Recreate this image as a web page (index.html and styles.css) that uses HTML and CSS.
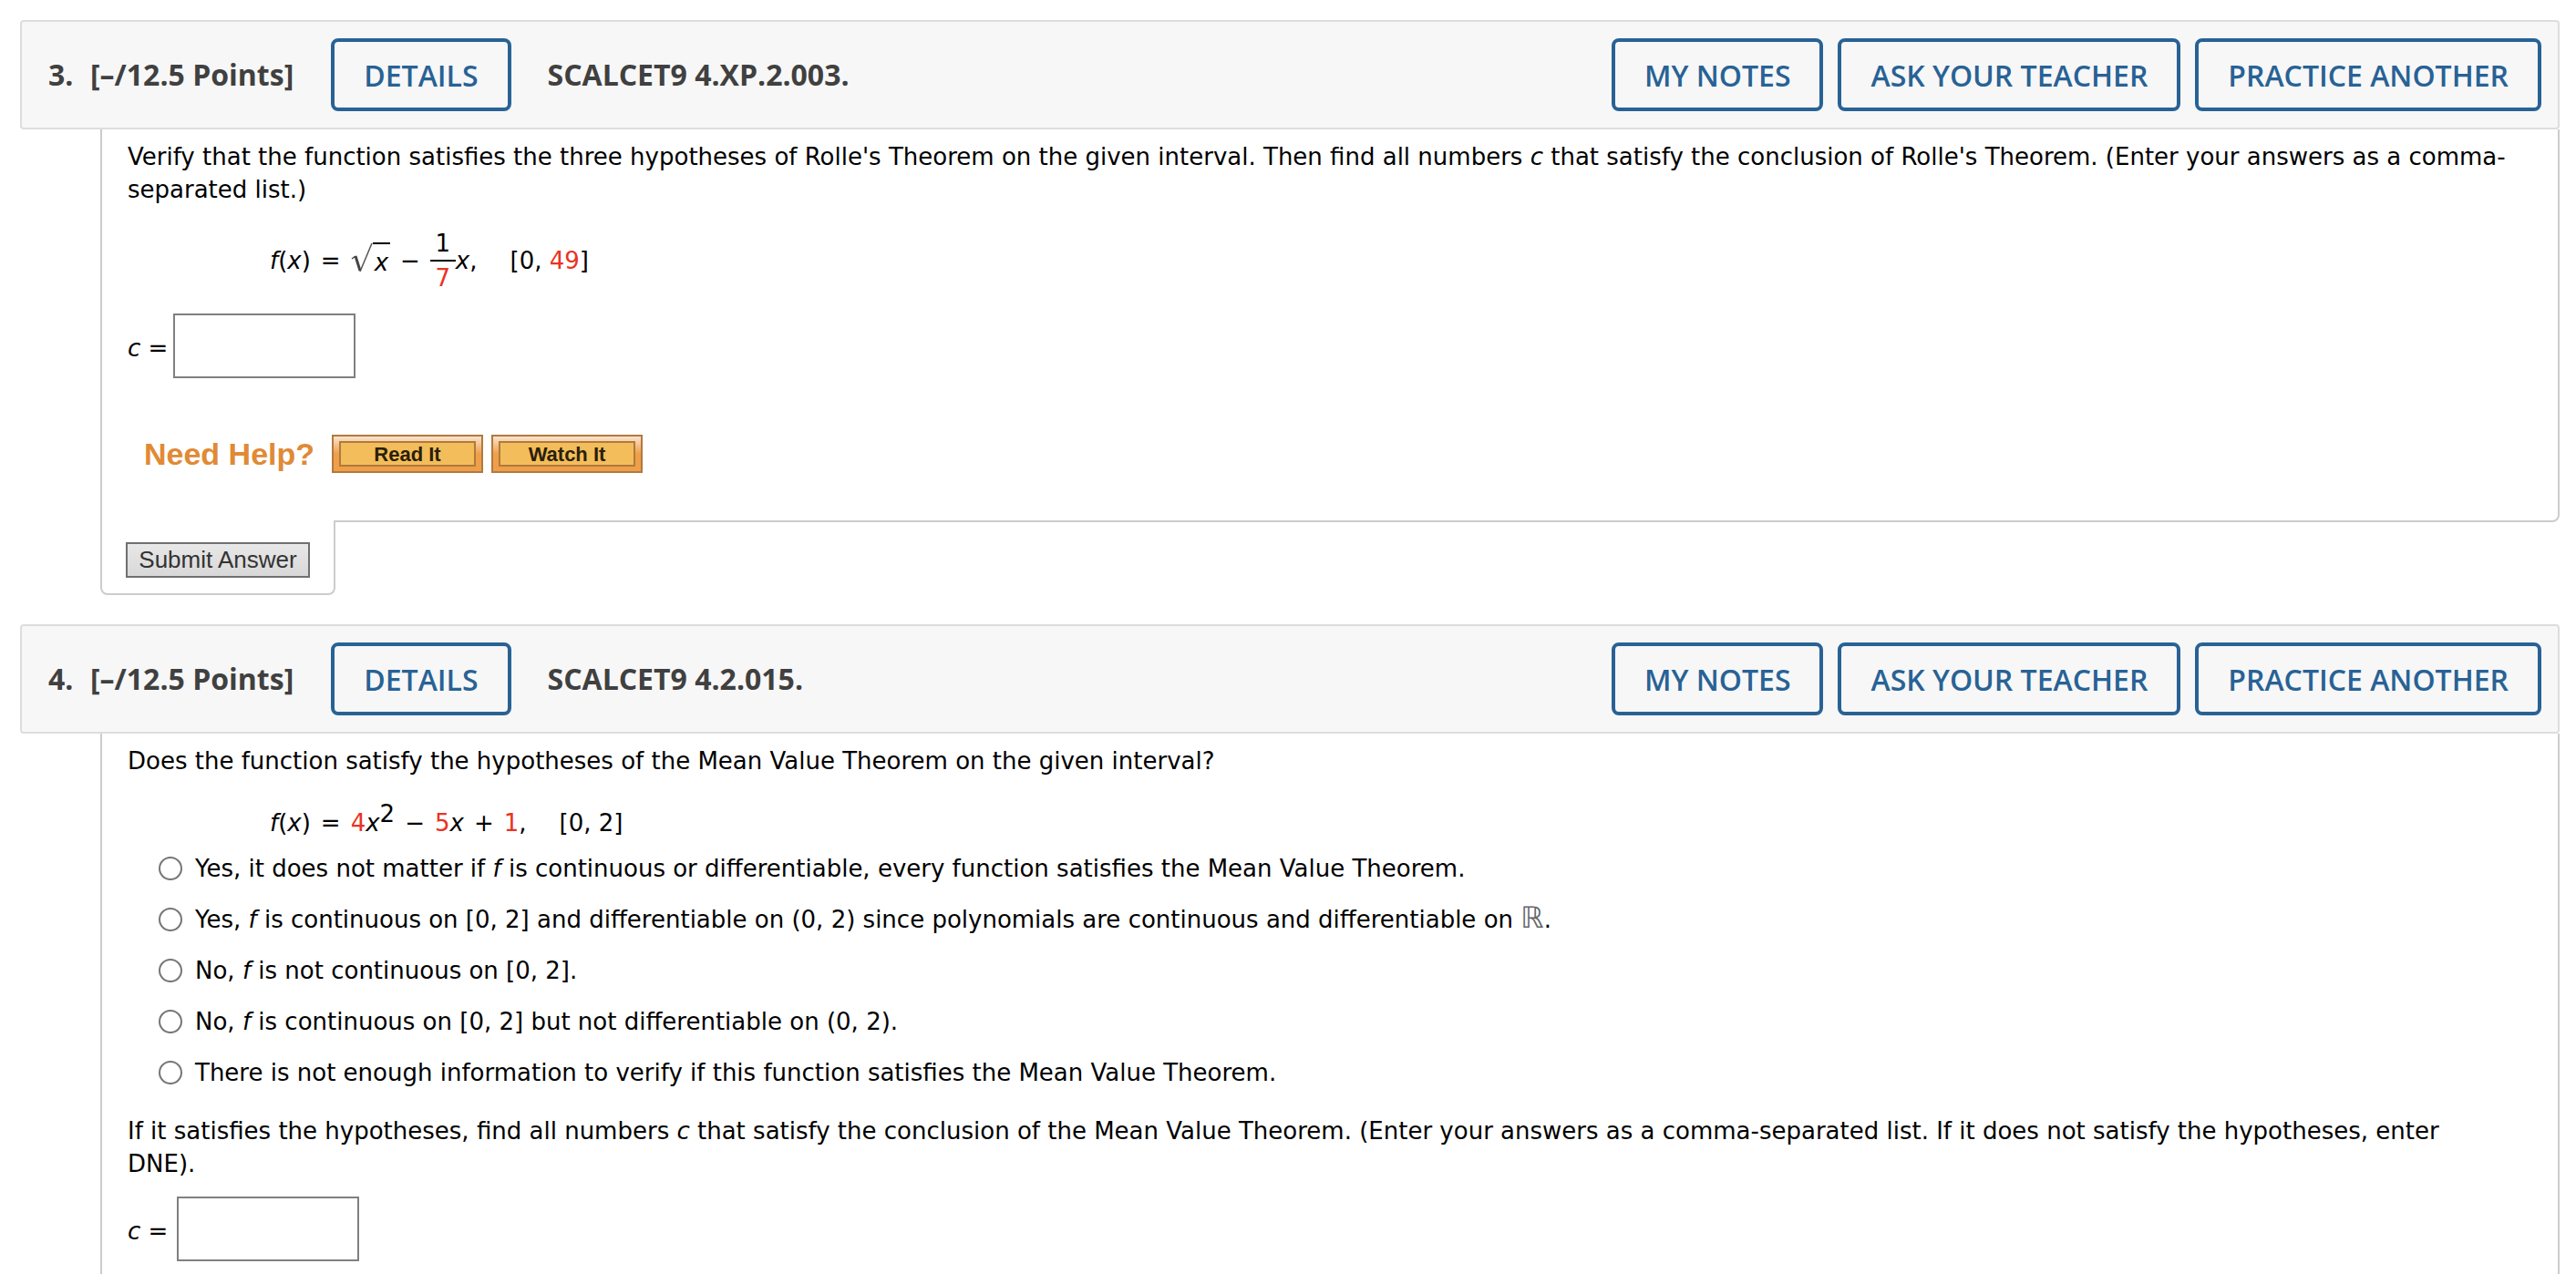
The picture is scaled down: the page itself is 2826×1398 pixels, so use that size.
FILE: index.html
```html
<!DOCTYPE html>
<html lang="en">
<head>
    <meta charset="UTF-8">
    <meta name="viewport" content="width=device-width, initial-scale=1.0">
    <title>Assignment Questions</title>
    <link rel="stylesheet" href="styles.css">
</head>
<body>

<!-- Question 3 -->
<section class="question">
    <header class="question-header">
        <span class="number">3.</span>
        <span class="points">[–/12.5 Points]</span>
        <button type="button" class="btn">DETAILS</button>
        <span class="source">SCALCET9 4.XP.2.003.</span>
        <div class="actions">
            <button type="button" class="btn">MY NOTES</button>
            <button type="button" class="btn">ASK YOUR TEACHER</button>
            <button type="button" class="btn">PRACTICE ANOTHER</button>
        </div>
    </header>
    <div class="panel">
        <p>Verify that the function satisfies the three hypotheses of Rolle's Theorem on the given interval. Then find all numbers <i>c</i> that satisfy the conclusion of Rolle's Theorem. (Enter your answers as a comma-separated list.)</p>

        <div class="formula formula-tall">
            <span><i>f</i>(<i>x</i>)</span>
            <span class="op">=</span>
            <span class="sqrt">
                <svg class="radical" viewBox="0 0 24 34" aria-hidden="true">
                    <path d="M1 18 L5 15" fill="none" stroke="#444" stroke-width="1.5"/>
                    <path d="M5 15 L10 31" fill="none" stroke="#444" stroke-width="3"/>
                    <path d="M10 32 L23 1" fill="none" stroke="#555" stroke-width="1.5"/>
                </svg>
                <i class="radicand">x</i>
            </span>
            <span class="op">−</span>
            <span class="fraction">
                <span class="top">1</span>
                <span class="red">7</span>
            </span>
            <span><i>x</i>,</span>
            <span class="interval">[0, <span class="red">49</span>]</span>
        </div>

        <div class="answer">
            <label for="c3"><i>c</i> =</label>
            <input type="text" id="c3">
        </div>

        <div class="help">
            <span class="help-title">Need Help?</span>
            <button type="button" class="help-btn"><span>Read It</span></button>
            <button type="button" class="help-btn"><span>Watch It</span></button>
        </div>
    </div>
    <div class="submit-tab">
        <button type="submit" class="submit">Submit Answer</button>
    </div>
</section>

<!-- Question 4 -->
<section class="question question-last">
    <header class="question-header">
        <span class="number">4.</span>
        <span class="points">[–/12.5 Points]</span>
        <button type="button" class="btn">DETAILS</button>
        <span class="source">SCALCET9 4.2.015.</span>
        <div class="actions">
            <button type="button" class="btn">MY NOTES</button>
            <button type="button" class="btn">ASK YOUR TEACHER</button>
            <button type="button" class="btn">PRACTICE ANOTHER</button>
        </div>
    </header>
    <div class="panel panel-open">
        <p>Does the function satisfy the hypotheses of the Mean Value Theorem on the given interval?</p>

        <div class="formula">
            <span><i>f</i>(<i>x</i>)</span>
            <span class="op">=</span>
            <span><span class="red">4</span><i>x</i><sup>2</sup></span>
            <span class="op">−</span>
            <span><span class="red">5</span><i>x</i></span>
            <span class="op">+</span>
            <span><span class="red">1</span>,</span>
            <span class="interval">[0, 2]</span>
        </div>

        <div class="choices">
            <label><input type="radio" name="q4"><span>Yes, it does not matter if <i>f</i> is continuous or differentiable, every function satisfies the Mean Value Theorem.</span></label>
            <label><input type="radio" name="q4"><span>Yes, <i>f</i> is continuous on [0, 2] and differentiable on (0, 2) since polynomials are continuous and differentiable on <span class="reals">ℝ</span>.</span></label>
            <label><input type="radio" name="q4"><span>No, <i>f</i> is not continuous on [0, 2].</span></label>
            <label><input type="radio" name="q4"><span>No, <i>f</i> is continuous on [0, 2] but not differentiable on (0, 2).</span></label>
            <label><input type="radio" name="q4"><span>There is not enough information to verify if this function satisfies the Mean Value Theorem.</span></label>
        </div>

        <p>If it satisfies the hypotheses, find all numbers <i>c</i> that satisfy the conclusion of the Mean Value Theorem. (Enter your answers as a comma-separated list. If it does not satisfy the hypotheses, enter DNE).</p>

        <div class="answer answer-wide">
            <label for="c4"><i>c</i> =</label>
            <input type="text" id="c4">
        </div>
    </div>
</section>

</body>
</html>
```
FILE: styles.css
```css
* {
    margin: 0;
    padding: 0;
    box-sizing: border-box;
}
body {
    min-height: 100vh;
    padding: 22px 18px 0 22px;
    display: flex;
    flex-direction: column;
    gap: 32px;
    background: #fff;
    color: #000;
    font-family: Verdana, "DejaVu Sans", sans-serif;
    font-size: 26px;
    line-height: 36px;
}
.question-last {
    flex: 1;
    display: flex;
    flex-direction: column;
}

/* Header bar */
.question-header {
    display: flex;
    align-items: center;
    padding: 18px 18px 18px 29px;
    background: #f7f7f7;
    border: 2px solid #ddd;
    border-radius: 4px;
    color: #404040;
    font-family: "Open Sans", sans-serif;
    font-size: 32px;
    font-weight: 700;
}
.number {
    width: 46px;
}
.points {
    margin-right: 41px;
}
.source {
    margin-left: 40px;
}
.actions {
    display: flex;
    gap: 16px;
    margin-left: auto;
}
.btn {
    height: 80px;
    padding: 0 32px;
    background: none;
    border: 4px solid #286295;
    border-radius: 8px;
    color: #286295;
    font-family: "Open Sans", sans-serif;
    font-size: 32px;
    font-weight: 600;
    cursor: pointer;
}

/* Question body */
.panel {
    margin-left: 88px;
    padding: 12px 54px 52px 28px;
    border: 2px solid #ccc;
    border-top: none;
    border-radius: 0 0 8px 0;
}
.panel-open {
    flex: 1;
    padding-bottom: 12px;
    border-bottom: none;
    border-radius: 0;
}
.red {
    color: #ea3323;
}

/* Formulas */
.formula {
    display: flex;
    align-items: baseline;
    padding-left: 156px;
    margin: 32px 0 14px;
}
.formula-tall {
    align-items: center;
    margin: 23px 0 21px;
}
.formula .op {
    margin: 0 11px;
}
.formula sup {
    font-size: 26px;
    line-height: 0;
}
.interval {
    margin-left: 36px;
}
.sqrt {
    display: flex;
    align-items: flex-start;
}
.radical {
    width: 24px;
    height: 34px;
}
.radicand {
    border-top: 2px solid #000;
    padding: 2px 2px 0;
}
.fraction {
    display: flex;
    flex-direction: column;
    align-items: center;
    width: 28px;
}
.fraction .top {
    width: 28px;
    border-bottom: 2px solid #000;
    text-align: center;
}

/* Answer box */
.answer {
    display: flex;
    align-items: center;
    gap: 6px;
}
.answer label {
    padding-top: 4px;
}
.answer-wide {
    gap: 10px;
    margin-top: 18px;
}
.answer input {
    width: 200px;
    height: 71px;
    border: 2px solid #808080;
    background: #fff;
    font: inherit;
}

/* Need help */
.help {
    display: flex;
    align-items: center;
    margin-top: 62px;
    padding-left: 18px;
    font-family: Arial, "Liberation Sans", sans-serif;
}
.help-title {
    width: 206px;
    color: #e08a35;
    font-size: 34px;
    font-weight: 700;
}
.help-btn {
    width: 166px;
    height: 42px;
    margin-right: 9px;
    padding: 5px 6px;
    background: linear-gradient(#fbe3cd, #ef9f49 50%);
    border: 2px solid #b07a3e;
    cursor: pointer;
}
.help-btn span {
    display: block;
    height: 28px;
    background: #f3bd5b;
    border: 2px solid #b07a3e;
    color: #2a2008;
    font-family: Arial, "Liberation Sans", sans-serif;
    font-size: 22px;
    font-weight: 700;
    line-height: 26px;
}

/* Submit */
.submit-tab {
    position: relative;
    width: 258px;
    margin: -2px 0 0 88px;
    padding: 24px 26px 17px;
    background: #fff;
    border: 2px solid #ccc;
    border-top: none;
    border-radius: 0 0 8px 8px;
}
.submit {
    display: block;
    width: 202px;
    height: 39px;
    background: linear-gradient(#e8e8e8, #d8d8d8);
    border: 2px solid #707070;
    color: #333;
    font-family: Arial, "Liberation Sans", sans-serif;
    font-size: 26px;
    cursor: pointer;
}

/* Multiple choice */
.choices {
    display: flex;
    flex-direction: column;
    gap: 20px;
    padding-left: 34px;
    margin-bottom: 28px;
}
.choices label {
    display: flex;
    align-items: center;
    gap: 14px;
}
.choices input {
    appearance: none;
    width: 26px;
    height: 26px;
    border: 2px solid #767676;
    border-radius: 50%;
    background: #fff;
}
.reals {
    color: #666;
    font-size: 32px;
    line-height: 0;
}
```
